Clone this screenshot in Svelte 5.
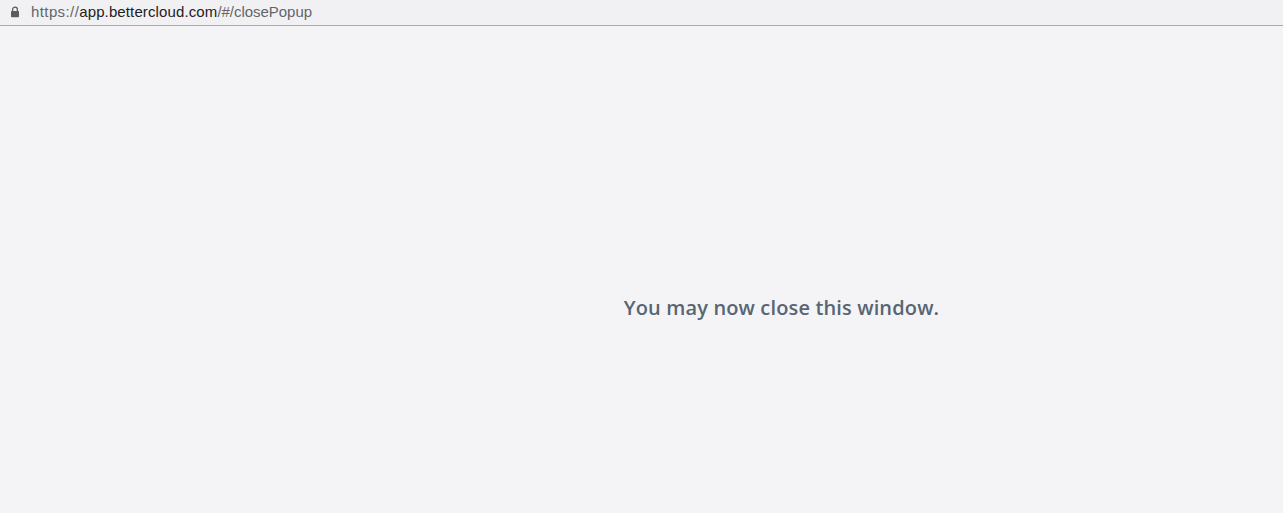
<script lang="ts">
	const scheme = 'https://';
	const host = 'app.bettercloud.com';
	const path = '/#/closePopup';
</script>

<div class="page">
	<header class="url-bar">
		<svg class="lock" width="10" height="12" viewBox="0 0 10 12" aria-hidden="true">
			<path d="M2.6 5V3.6a2.4 2.4 0 0 1 4.8 0V5" fill="none" stroke="#5a5b5e" stroke-width="1.3" />
			<rect x="1" y="5" width="8" height="6.2" rx="0.8" fill="#5a5b5e" />
		</svg>
		<span class="url"><span class="dim scheme">{scheme}</span>{host}<span class="dim path">{path}</span></span>
	</header>
	<main class="content">
		<p class="message">You may now close this window.</p>
	</main>
</div>

<style>
	:global(body) {
		margin: 0;
		background: #f4f4f6;
	}

	.page {
		display: flex;
		flex-direction: column;
		height: 513px;
		overflow: hidden;
	}

	.url-bar {
		display: flex;
		align-items: center;
		gap: 11px;
		box-sizing: border-box;
		height: 26px;
		padding: 0 0 1px 10px;
		background: #f1f1f3;
		border-bottom: 1px solid #a9aaac;
	}

	.lock {
		flex: none;
		margin-top: -1px;
	}

	.url {
		font-family: 'Liberation Sans', Arial, sans-serif;
		font-size: 15px;
		color: #1f2023;
		letter-spacing: 0.12px;
		margin-top: -1px;
	}

	.dim {
		color: #63656a;
	}

	.scheme {
		letter-spacing: 0.4px;
	}

	.path {
		letter-spacing: -0.04px;
	}

	.content {
		flex: 1;
		display: flex;
		justify-content: center;
		padding: 269px 0 0 280px;
	}

	.message {
		margin: 0;
		font-family: 'Open Sans', sans-serif;
		font-size: 20px;
		font-weight: 600;
		letter-spacing: 0.14px;
		line-height: 26px;
		color: #586573;
	}
</style>
